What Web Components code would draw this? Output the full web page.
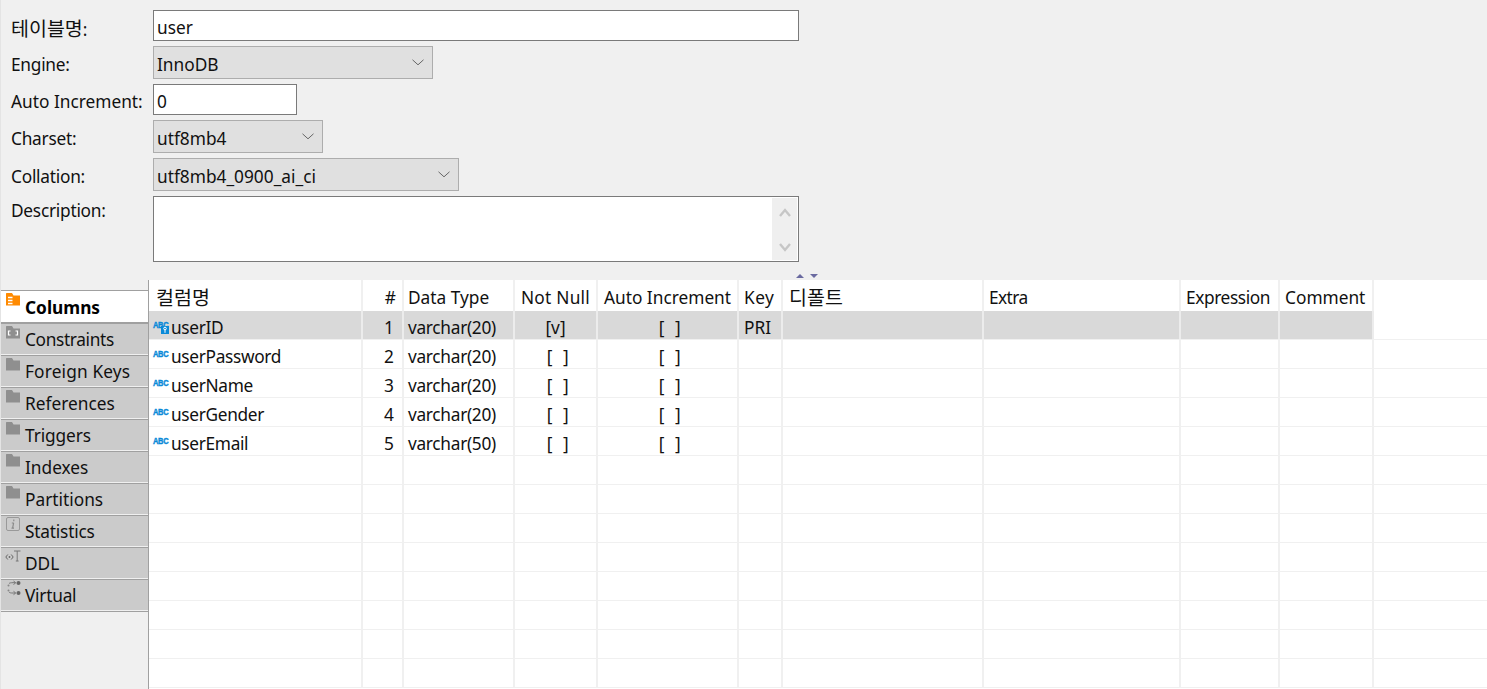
<!DOCTYPE html>
<html>
<head>
<meta charset="utf-8">
<style>
  html, body { margin: 0; height: 100%; overflow: hidden; background: #f0f0f0; }
  body { font: 17.3px "Noto Sans", "Noto Sans CJK KR", sans-serif; color: #111; }
</style>
</head>
<body>
<table-editor>
  <table-form slot="form">
    <form-row label="테이블명:" height="31" ko><text-box value="user" width="646"></text-box></form-row>
    <form-row label="Engine:" height="33" tight><combo-box value="InnoDB" width="280"></combo-box></form-row>
    <form-row label="Auto Increment:" height="31"><text-box value="0" width="144"></text-box></form-row>
    <form-row label="Charset:" height="33" tight><combo-box value="utf8mb4" width="170"></combo-box></form-row>
    <form-row label="Collation:" height="33" tight><combo-box value="utf8mb4_0900_ai_ci" width="306"></combo-box></form-row>
    <form-row label="Description:" height="66" top tight><memo-box width="646"></memo-box></form-row>
  </table-form>
  <side-tabs slot="tabs"></side-tabs>
  <column-grid slot="grid"></column-grid>
</table-editor>

<script>
  const ICONS = {
    columns: '<svg width="15" height="13" viewBox="0 0 15 13"><path d="M0 .5V12.500h14V2.500H7.500L6 0H.5z" fill="#ff8a00"/><path d="M2 4.500h4.500M2 7.500h4.500M2 10.500h4.500" stroke="#fff" stroke-width="1.600"/></svg>',
    constraints: '<svg width="15" height="13" viewBox="0 0 15 13"><path d="M0 .5V12.500h14V2.500H7.500L6 0H.5z" fill="#8f8f8f"/><path d="M4.500 5H2.500v4h2M9.500 5h2v4h-2" fill="none" stroke="#fff" stroke-width="1.200"/></svg>',
    folder: '<svg width="15" height="13" viewBox="0 0 15 13"><path d="M0 .5V12.500h14V2.500H7.500L6 0H.5z" fill="#8f8f8f"/></svg>',
    info: '<svg width="15" height="14" viewBox="0 0 15 14" style="margin-top:-1px"><rect x=".5" y=".5" width="13" height="13" rx="1.500" fill="none" stroke="#999"/><path d="M7.800 2.600v1.600M7.600 6 6.600 11.200M5.800 6h2M5.500 11.200h2.500" stroke="#8a8a8a" stroke-width="1.200" fill="none"/></svg>',
    ddl: '<svg width="16" height="14" viewBox="0 0 16 14" style="margin-left:-1px"><path d="M2.800 4.500.8 7l2 2.500M6.200 4.500l2 2.500-2 2.500" fill="none" stroke="#666"/><circle cx="4.500" cy="7" r=".9" fill="#666"/><path d="M9 1h6.500M12.200 1v10M10.800 11h2.800" stroke="#777" fill="none"/></svg>',
    virtual: '<svg width="16" height="16" viewBox="0 0 16 16" style="margin-top:-2px"><circle cx="12.500" cy="3" r="2" fill="#666"/><circle cx="12.500" cy="13" r="2" fill="#666"/><circle cx="2.500" cy="5.500" r="1" fill="#888"/><circle cx="2.500" cy="10.500" r="1" fill="#888"/><path d="M3 3.500c1-.7 2-.8 4-.8h2M7.500 1 9.800 2.800 7.500 4.500M3 12c1 1 2 1 4 1h2M7.500 11.300 9.800 13 7.500 14.700" fill="none" stroke="#777"/></svg>'
  };

  const ABC = '<text transform="translate(1 8) scale(1 1.300)" font-family="Liberation Sans" font-weight="700" font-size="7.500" fill="#0a8ad8" stroke="#0a8ad8" stroke-width=".35">ABC</text>';
  const abcIcon = (key) => `<svg width="18" height="14" viewBox="0 0 18 14">${ABC}${key
    ? '<rect x="9" y="6" width="8" height="8" fill="#0a8ad8"/><circle cx="13" cy="8.500" r="1.300" fill="none" stroke="#fff"/><path d="M13 9.800v3" stroke="#fff"/>'
    : ''}</svg>`;

  const ko = (text) => `<span class="ko" style="font-size:19.500px">${text}</span>`;

  class TableEditor extends HTMLElement {
    constructor() {
      super();
      this.attachShadow({ mode: 'open' }).innerHTML = `
        <style>
          :host { display: grid; grid-template-columns: 149px 1fr; grid-template-rows: 280px 1fr; height: 689px; position: relative; }
          .form { grid-column: 1 / 3; }
          .split { position: absolute; left: 796px; top: 274px; display: flex; gap: 6px; }
          .split i { width: 0; height: 0; border-left: 4px solid transparent; border-right: 4px solid transparent; }
          .up { border-bottom: 4px solid #6a6aa0; }
          .down { border-top: 4px solid #6a6aa0; }
        </style>
        <div class="form"><slot name="form"></slot></div>
        <slot name="tabs"></slot>
        <slot name="grid"></slot>
        <div class="split"><i class="up"></i><i class="down"></i></div>`;
    }
  }

  class TableForm extends HTMLElement {
    constructor() {
      super();
      this.attachShadow({ mode: 'open' }).innerHTML = `
        <style>
          :host { display: flex; flex-direction: column; gap: 5px; padding: 10px 0 0 11px; box-shadow: inset 1px 0 #e4e4e4; box-sizing: border-box; height: 280px; }
        </style>
        <slot></slot>`;
    }
  }

  class FormRow extends HTMLElement {
    constructor() {
      super();
      const label = this.getAttribute('label');
      const height = this.getAttribute('height');
      const top = this.hasAttribute('top');
      this.attachShadow({ mode: 'open' }).innerHTML = `
        <style>
          :host { display: grid; grid-template-columns: 142px 1fr; grid-template-rows: ${height}px; align-items: ${top ? 'start' : 'center'}; }
          .label { white-space: nowrap; padding-top: 3px; letter-spacing: ${this.hasAttribute('tight') ? '-0.25px' : '0'}; }
        </style>
        <div class="label">${this.hasAttribute('ko') ? `${ko(label.slice(0, -1))}:` : label}</div>
        <slot></slot>`;
    }
  }

  class TextBox extends HTMLElement {
    constructor() {
      super();
      this.attachShadow({ mode: 'open' }).innerHTML = `
        <style>
          :host { display: flex; align-items: center; box-sizing: border-box; height: 31px; width: ${this.getAttribute('width')}px;
            background: #fff; border: 1px solid #7a7a7a; padding: 3px 0 0 3px; }
        </style>
        <span>${this.getAttribute('value')}</span>`;
    }
  }

  class ComboBox extends HTMLElement {
    constructor() {
      super();
      this.attachShadow({ mode: 'open' }).innerHTML = `
        <style>
          :host { display: flex; align-items: center; justify-content: space-between; box-sizing: border-box; height: 33px; width: ${this.getAttribute('width')}px;
            background: #e0e0e0; border: 1px solid #adadad; padding: 0 7px 0 3px; }
          span { padding-top: 3px; }
        </style>
        <span>${this.getAttribute('value')}</span>
        <svg width="14" height="7" viewBox="0 0 14 7"><path d="M1.500 .8l5.500 5 5.500-5" fill="none" stroke="#666"/></svg>`;
    }
  }

  class MemoBox extends HTMLElement {
    constructor() {
      super();
      this.attachShadow({ mode: 'open' }).innerHTML = `
        <style>
          :host { display: flex; justify-content: flex-end; box-sizing: border-box; height: 66px; width: ${this.getAttribute('width')}px;
            background: #fff; border: 1px solid #7a7a7a; padding: 1px; }
          .bar { width: 25px; background: #efefef; display: flex; flex-direction: column; justify-content: space-between; align-items: center; padding: 10px 0 8px; box-sizing: border-box; }
        </style>
        <div class="bar">
          <svg width="12" height="9" viewBox="0 0 12 9"><path d="M1 8l5-6 5 6" fill="none" stroke="#c6c6c6" stroke-width="2.400"/></svg>
          <svg width="12" height="9" viewBox="0 0 12 9"><path d="M1 1l5 6 5-6" fill="none" stroke="#c6c6c6" stroke-width="2.400"/></svg>
        </div>`;
    }
  }

  class SideTabs extends HTMLElement {
    constructor() {
      super();
      const tabs = [
        ['Columns', 'columns'], ['Constraints', 'constraints', -0.35], ['Foreign Keys', 'folder', 0.15],
        ['References', 'folder'], ['Triggers', 'folder', -0.1], ['Indexes', 'folder'],
        ['Partitions', 'folder'], ['Statistics', 'info', -0.2], ['DDL', 'ddl'], ['Virtual', 'virtual', -0.25]
      ];
      const html = tabs.map(([name, icon, ls], i) => `
        <div class="tab ${i === 0 ? 'on' : ''}"><span class="ico">${ICONS[icon]}</span><span style="letter-spacing:${ls || 0}px">${name}</span></div>`).join('');
      this.attachShadow({ mode: 'open' }).innerHTML = `
        <style>
          :host { display: block; box-sizing: border-box; padding-top: 10px; border-right: 1px solid #a0a0a0; box-shadow: inset 1px 0 #e4e4e4; }
          .tab { box-sizing: border-box; height: 32px; padding-left: 24px; position: relative; background: #cbcbcb; margin-left: 1px;
            border-bottom: 1px solid #a0a0a0; box-shadow: inset 0 -1px #f0f0f0; line-height: 32px; white-space: nowrap; }
          .tab.on { background: #fff; font-weight: 700; color: #000; height: 34px; border-top: 1px solid #a0a0a0; border-bottom: 2px solid #a0a0a0; box-shadow: none; line-height: 34px; }
          .ico { position: absolute; left: 5px; top: 2px; line-height: 0; }
        </style>
        ${html}`;
    }
  }

  class ColumnGrid extends HTMLElement {
    constructor() {
      super();
      const cols = [
        [ko('컬럼명'), 214, 'l'], ['#', 41, 'r'], ['Data Type', 111, 'l dt'], ['Not Null', 83, 'c', 0.25],
        ['Auto Increment', 141, 'c'], ['Key', 44, 'l', 0.5], [ko('디폴트'), 201, 'l ml'],
        ['Extra', 197, 'l', -0.6], ['Expression', 99, 'l', -0.4], ['Comment', 94, 'l']
      ];
      const box = '<span class="box">[  ]</span>';
      const data = [
        ['userID', 1, 'varchar(20)', '[v]', box, 'PRI'],
        ['userPassword', 2, 'varchar(20)', box, box, ''],
        ['userName', 3, 'varchar(20)', box, box, ''],
        ['userGender', 4, 'varchar(20)', box, box, ''],
        ['userEmail', 5, 'varchar(50)', box, box, '']
      ];
      const cell = (text, col, ls) => `<div class="cell ${col[2]}" style="width:${col[1]}px;letter-spacing:${ls || 0}px">${text}</div>`;
      const head = cols.map((c) => cell(c[0], c, c[3])).join('');
      let body = '';
      for (let r = 0; r < 13; r += 1) {
        const row = data[r];
        const cells = cols.map((c, i) => {
          if (!row) return cell('', c);
          if (i === 0) return cell(`<span class="abc">${abcIcon(r === 0)}</span>${row[0]}`, c, -0.33);
          return cell(row[i] === undefined ? '' : row[i], c, i === 2 ? -0.3 : 0);
        }).join('');
        body += `<div class="row ${r === 0 ? 'sel' : ''}">${cells}<div class="rest"></div></div>`;
      }
      this.attachShadow({ mode: 'open' }).innerHTML = `
        <style>
          :host { display: block; background: #fff; overflow: hidden; }
          .row { display: flex; height: 29px; box-sizing: border-box; border-bottom: 1px solid #f0f0f0; }
          .row.head { height: 31px; border-bottom: 0; }
          .row.sel .cell { background: #d9d9d9; border-right-color: #ececec; }
          .cell { box-sizing: border-box; border-right: 2px solid #f0f0f0; padding: 4px 5px 0; display: flex; align-items: center; white-space: pre; flex: none; }
          .head .ko { margin-top: -3px; }
          .cell:first-child { padding-left: 3px; }
          .row.head .cell:first-child { padding-left: 7px; }
          .r { justify-content: flex-end; padding-right: 8px; }
          .head .r { padding-right: 6px; }
          .dt { padding-left: 4px; }
          .ml { padding-left: 6px; }
          .c { justify-content: center; }
          .box { margin-left: 5px; letter-spacing: .5px; }
          .abc { display: block; width: 19px; height: 14px; align-self: flex-start; margin-top: 5px; line-height: 0; }
          .rest { flex: 1; }
        </style>
        <div class="row head">${head}<div class="rest"></div></div>
        ${body}`;
    }
  }

  customElements.define('table-editor', TableEditor);
  customElements.define('table-form', TableForm);
  customElements.define('form-row', FormRow);
  customElements.define('text-box', TextBox);
  customElements.define('combo-box', ComboBox);
  customElements.define('memo-box', MemoBox);
  customElements.define('side-tabs', SideTabs);
  customElements.define('column-grid', ColumnGrid);
</script>
</body>
</html>
